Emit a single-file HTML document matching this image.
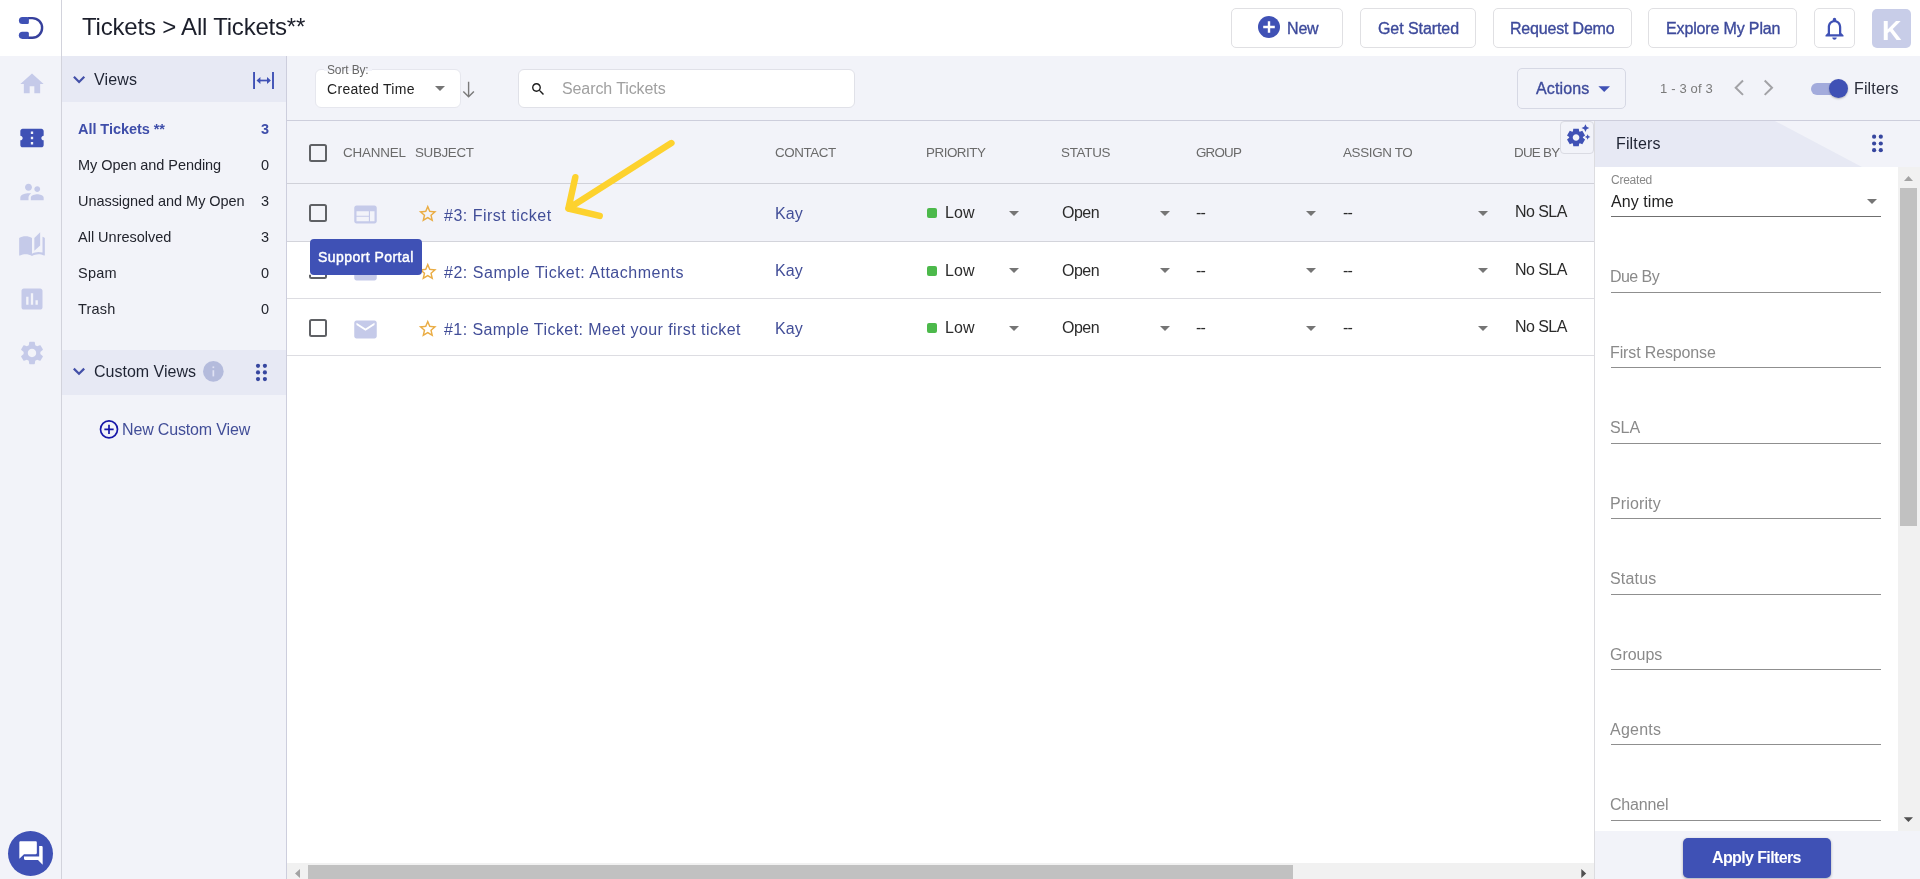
<!DOCTYPE html>
<html lang="en"><head><meta charset="utf-8"><title>Tickets - All Tickets</title>
<style>
html,body{margin:0;padding:0}
body{width:1920px;height:879px;overflow:hidden;position:relative;background:#f2f3f9;font-family:"Liberation Sans",sans-serif;-webkit-font-smoothing:antialiased}
.t{position:absolute;line-height:1;white-space:nowrap;z-index:2;will-change:transform}
.z3{z-index:3}
.z5{z-index:6}
.a{position:absolute;box-sizing:border-box}
svg{position:absolute;overflow:visible}
.btn{position:absolute;box-sizing:border-box;border:1px solid #e0e0e3;border-radius:5px;background:#fff}
.cb{position:absolute;box-sizing:border-box;width:18px;height:18px;border:2px solid #5f6165;border-radius:2.5px}
.ln{position:absolute;height:1px;background:#d4d6e4}
.ul{position:absolute;left:1611px;width:270px;height:1px;background:#8f8f8f}
.tri{position:absolute;width:0;height:0;border-left:5px solid transparent;border-right:5px solid transparent;border-top:5.2px solid #757575}
.gsq{position:absolute;width:10px;height:10px;border-radius:2px;background:#4cb94b}

</style></head>
<body>
<!-- top header -->
<div class="a" id="hdr" style="left:0;top:0;width:1920px;height:56px;background:#fff"></div>
<div class="a" style="left:61px;top:0;width:1px;height:879px;background:#d2d3dc"></div>
<!-- logo -->
<svg style="left:0;top:0" width="62" height="56" viewBox="0 0 62 56">
  <path d="M28 18.1H32.3A9.8 9.8 0 0 1 32.3 37.7H28" fill="none" stroke="#36409c" stroke-width="2.4"/>
  <path d="M22.4 16.9H27.4Q28.9 16.9 28.9 18.4V22.4Q28.9 23.9 27.4 23.9H22.4A3.5 3.5 0 0 1 22.4 16.9Z" fill="#3f51b5"/>
  <path d="M22.4 31.8H27.4Q28.9 31.8 28.9 33.3V37.4Q28.9 38.9 27.4 38.9H22.4A3.55 3.55 0 0 1 22.4 31.8Z" fill="#3f51b5"/>
</svg>
<!-- nav rail icons (28px material) -->
<svg style="left:17.7px;top:69.8px" width="28" height="28" viewBox="0 0 24 24"><path fill="#c5cae9" d="M10 20v-6h4v6h5v-8h3L12 3 2 12h3v8z"/></svg>
<svg style="left:17.7px;top:123.6px" width="28" height="28" viewBox="0 0 24 24"><path fill="#3f51b5" d="M22 10V6c0-1.11-.9-2-2-2H4c-1.1 0-1.990.890-1.990 2v4c1.100 0 1.990.900 1.990 2s-.890 2-2 2v4c0 1.100.900 2 2 2h16c1.100 0 2-.900 2-2v-4c-1.100 0-2-.900-2-2s.900-2 2-2zm-9 7.500h-2v-2h2v2zm0-4.500h-2v-2h2v2zm0-4.500h-2v-2h2v2z"/></svg>
<svg style="left:17.7px;top:177.5px" width="28" height="28" viewBox="0 0 24 24"><path fill="#c5cae9" d="M16.500 12c1.380 0 2.490-1.120 2.490-2.500S17.880 7 16.500 7C15.120 7 14 8.120 14 9.500s1.120 2.500 2.500 2.500zM9 11c1.660 0 2.990-1.340 2.990-3S10.660 5 9 5C7.340 5 6 6.340 6 8s1.340 3 3 3zm7.500 3c-1.830 0-5.500.920-5.500 2.750V19h11v-2.250c0-1.830-3.670-2.750-5.500-2.750zM9 13c-2.330 0-7 1.170-7 3.500V19h7v-2.250c0-.850.330-2.340 2.370-3.470C10.500 13.100 9.660 13 9 13z"/></svg>
<svg style="left:17.7px;top:231.4px" width="28" height="28" viewBox="0 0 24 24"><path fill="#c5cae9" d="M19 1l-5 5v11l5-4.500V1zM1 6v14.650c0 .250.250.500.500.500.100 0 .150-.050.250-.050C3.100 20.450 5.050 20 6.500 20c1.950 0 4.050.400 5.500 1.500V6c-1.450-1.100-3.550-1.500-5.500-1.500S2.450 4.900 1 6zm22 13.500V6c-.600-.450-1.250-.750-2-1v13.500c-1.100-.350-2.300-.500-3.500-.500-1.700 0-4.150.650-5.500 1.500v2c1.350-.850 3.800-1.500 5.500-1.500 1.650 0 3.350.300 4.750 1.050.100.050.150.050.250.050.250 0 .500-.250.500-.500v-1z"/></svg>
<svg style="left:17.7px;top:285.3px" width="28" height="28" viewBox="0 0 24 24"><path fill="#c5cae9" d="M19 3H5c-1.100 0-2 .900-2 2v14c0 1.100.900 2 2 2h14c1.100 0 2-.900 2-2V5c0-1.100-.900-2-2-2zM9 17H7v-7h2v7zm4 0h-2V7h2v10zm4 0h-2v-4h2v4z"/></svg>
<svg style="left:17.7px;top:339.2px" width="28" height="28" viewBox="0 0 24 24"><path fill="#c5cae9" d="M19.140 12.940c.040-.300.060-.610.060-.940 0-.320-.020-.640-.070-.940l2.030-1.580c.180-.140.230-.410.120-.610l-1.920-3.320c-.120-.220-.370-.290-.590-.220l-2.390.960c-.500-.380-1.030-.700-1.620-.940l-.360-2.540c-.040-.240-.240-.410-.480-.410h-3.840c-.240 0-.430.170-.470.410l-.360 2.540c-.590.240-1.130.570-1.620.940l-2.390-.960c-.220-.080-.470 0-.590.220L2.740 8.870c-.120.210-.080.470.120.610l2.030 1.580c-.050.300-.090.630-.090.940s.020.640.070.940l-2.030 1.580c-.180.140-.230.410-.120.610l1.920 3.320c.120.220.370.290.590.220l2.390-.960c.500.380 1.030.700 1.620.940l.360 2.540c.050.240.240.410.480.410h3.840c.240 0 .440-.170.470-.410l.360-2.540c.590-.240 1.130-.560 1.620-.940l2.390.960c.220.080.470 0 .590-.220l1.920-3.320c.120-.220.070-.470-.120-.610l-2.010-1.580zM12 15.600c-1.980 0-3.600-1.620-3.600-3.600s1.620-3.600 3.600-3.600 3.600 1.620 3.600 3.600-1.620 3.600-3.600 3.600z"/></svg>
<!-- chat fab -->
<div class="a" style="left:8px;top:831px;width:45px;height:45px;border-radius:50%;background:#3f51b5"></div>
<svg style="left:17px;top:838.5px" width="28" height="28" viewBox="0 0 24 24"><path fill="#fff" d="M21 6h-2v9H6v2c0 .55.45 1 1 1h11l4 4V7c0-.55-.45-1-1-1zm-4 6V3c0-.55-.45-1-1-1H3c-.55 0-1 .45-1 1v14l4-4h10c.55 0 1-.45 1-1z"/></svg>

<!-- header buttons -->
<div class="btn" style="left:1231px;top:8px;width:112px;height:40px"></div>
<div class="btn" style="left:1360px;top:8px;width:116px;height:40px"></div>
<div class="btn" style="left:1492.5px;top:8px;width:139px;height:40px"></div>
<div class="btn" style="left:1647.5px;top:8px;width:149px;height:40px"></div>
<div class="btn" style="left:1813.5px;top:8px;width:41px;height:40px"></div>
<svg style="left:1258.4px;top:16.4px" width="22" height="22" viewBox="0 0 22 22"><circle cx="11" cy="11" r="11" fill="#3f51b5"/><path d="M11 5.2V16.800M5.200 11H16.800" stroke="#fff" stroke-width="2.4" fill="none"/></svg>
<svg style="left:1820.9px;top:15px" width="27" height="27" viewBox="0 0 24 24"><path fill="#3f51b5" d="M12 22c1.100 0 2-.900 2-2h-4c0 1.100.900 2 2 2zm6-6v-5c0-3.070-1.630-5.640-4.500-6.320V4c0-.830-.670-1.500-1.500-1.500s-1.500.670-1.500 1.500v.680C7.640 5.360 6 7.920 6 11v5l-2 2v1h16v-1l-2-2zm-2 1H8v-6c0-2.480 1.510-4.500 4-4.500s4 2.020 4 4.500v6z"/></svg>
<div class="a" style="left:1872px;top:9px;width:39px;height:39px;border-radius:5px;background:#c8cde8"></div>

<!-- sidebar -->
<div class="a" style="left:62px;top:56px;width:224px;height:46px;background:#e7e9f4"></div>
<div class="a" style="left:62px;top:350px;width:224px;height:44.500px;background:#e7e9f4"></div>
<div class="a" style="left:286px;top:56px;width:1px;height:823px;background:#cdcedd"></div>
<svg style="left:62px;top:56px" width="224" height="400" viewBox="62 56 224 400">
  <path d="M73.900 76.800L79.100 82L84.300 76.800" fill="none" stroke="#4350a8" stroke-width="2.200"/>
  <path d="M73.800 368.600L79 373.800L84.200 368.600" fill="none" stroke="#4350a8" stroke-width="2.200"/>
  <path d="M254.050 72.100V88.900M273 72.100V88.900" stroke="#3f51b5" stroke-width="1.900" fill="none"/>
  <path d="M259.500 80.500H268" stroke="#3f51b5" stroke-width="1.700" fill="none"/>
  <path d="M256.500 80.500L260.400 76.900V84.100ZM270.900 80.500L267 76.900V84.100Z" fill="#3f51b5"/>
  <circle cx="213.350" cy="371.400" r="10.300" fill="#b4bbdc"/>
  <rect x="212.500" y="370.200" width="1.700" height="6.200" fill="#dfe2f3"/><rect x="212.500" y="366.400" width="1.700" height="1.700" fill="#dfe2f3"/>
  <g fill="#36469f"><circle cx="258.0" cy="365.8" r="2.100"/><circle cx="264.9" cy="365.8" r="2.100"/><circle cx="258.0" cy="372.4" r="2.100"/><circle cx="264.9" cy="372.4" r="2.100"/><circle cx="258.0" cy="379.1" r="2.100"/><circle cx="264.9" cy="379.1" r="2.100"/></g>
  <circle cx="109" cy="429.350" r="8.500" fill="none" stroke="#1717a8" stroke-width="1.700"/>
  <path d="M109 424.700V434M104.350 429.350H113.650" stroke="#1717a8" stroke-width="1.700" fill="none"/>
</svg>

<!-- toolbar -->
<div class="ln" style="left:287px;top:120px;width:1633px;background:#cdcedc"></div>
<div class="a" style="left:315px;top:69px;width:146px;height:39px;background:#fff;border:1px solid #e6e7ee;border-radius:6px"></div>
<div class="a" style="left:324px;top:67px;width:48px;height:4px;background:#f2f3f9"></div>
<div class="tri" style="left:435.200px;top:86.200px"></div>
<svg style="left:460px;top:78px" width="18" height="22" viewBox="460 78 18 22"><path d="M468.600 81.700V97M463.300 91.400L468.600 96.800L473.900 91.400" fill="none" stroke="#7a7a7a" stroke-width="1.400"/></svg>
<div class="a" style="left:518px;top:69px;width:337px;height:39px;background:#fff;border:1px solid #e0e1e8;border-radius:6px"></div>
<svg style="left:530.100px;top:80.800px" width="16.400" height="16.400" viewBox="0 0 24 24"><path fill="#1d1d1d" d="M15.500 14h-.790l-.280-.270C15.410 12.590 16 11.110 16 9.500 16 5.910 13.090 3 9.500 3S3 5.910 3 9.500 5.910 16 9.500 16c1.610 0 3.090-.590 4.230-1.570l.270.280v.790l5 4.990L20.490 19l-4.990-5zm-6 0C7.010 14 5 11.990 5 9.500S7.010 5 9.500 5 14 7.010 14 9.500 11.990 14 9.500 14z"/></svg>
<div class="a" style="left:1517px;top:68px;width:109px;height:41px;border:1px solid #d6d8e4;border-radius:5px"></div>
<svg style="left:1598px;top:86px" width="13" height="7" viewBox="1598 86 13 7"><path d="M1598.400 86.200H1610L1604.200 92.100Z" fill="#3f51b5"/></svg>
<svg style="left:1730px;top:76px" width="50" height="24" viewBox="1730 76 50 24"><path d="M1743 80.500L1735.700 87.700L1743 94.900M1764.700 80.500L1772 87.700L1764.700 94.900" fill="none" stroke="#a2a2a6" stroke-width="2"/></svg>
<div class="a" style="left:1811px;top:83px;width:34px;height:12px;border-radius:6px;background:#a3abdc"></div>
<div class="a" style="left:1828.500px;top:79.300px;width:19px;height:19px;border-radius:50%;background:#3f51b5;box-shadow:0 1px 2px rgba(0,0,0,.25)"></div>

<!-- table -->
<div class="a" style="left:287px;top:242px;width:1307px;height:621px;background:#fff"></div>
<div class="ln" style="left:287px;top:183px;width:1307px;background:#d0d1d9"></div>
<div class="ln" style="left:287px;top:241px;width:1307px;background:#d3d4db"></div>
<div class="ln" style="left:287px;top:298px;width:1307px;background:#dddde2"></div>
<div class="ln" style="left:287px;top:355px;width:1307px;background:#dddde2"></div>
<div class="cb" style="left:309px;top:144px"></div>
<div class="cb" style="left:309px;top:204px"></div>
<div class="cb" style="left:309px;top:261.400px;clip-path:inset(13.400px 0 0 0)"></div>
<div class="cb" style="left:309px;top:319px"></div>
<!-- channel icons -->
<svg style="left:352.400px;top:200.900px" width="27" height="27" viewBox="0 0 24 24"><path fill="#c5cae9" d="M20 4H4c-1.100 0-1.990.900-1.990 2L2 18c0 1.100.900 2 2 2h16c1.100 0 2-.900 2-2V6c0-1.100-.900-2-2-2zm-5 14H4v-4h11v4zm0-5H4V9h11v4zm5 5h-4V9h4v9z"/></svg>
<svg style="left:352.400px;top:258.300px" width="27" height="27" viewBox="0 0 24 24"><path fill="#c5cae9" d="M20 4H4c-1.100 0-1.990.900-1.990 2L2 18c0 1.100.900 2 2 2h16c1.100 0 2-.900 2-2V6c0-1.100-.900-2-2-2zm0 4l-8 5-8-5V6l8 5 8-5v2z"/></svg>
<svg style="left:352.400px;top:315.900px" width="27" height="27" viewBox="0 0 24 24"><path fill="#c5cae9" d="M20 4H4c-1.100 0-1.990.900-1.990 2L2 18c0 1.100.900 2 2 2h16c1.100 0 2-.900 2-2V6c0-1.100-.900-2-2-2zm0 4l-8 5-8-5V6l8 5 8-5v2z"/></svg>
<!-- stars -->
<svg style="left:416.650px;top:203.40px" width="21.500" height="21.500" viewBox="0 0 24 24"><path fill="#eaad45" d="M22 9.240l-7.190-.620L12 2 9.190 8.630 2 9.240l5.460 4.730L5.820 21 12 17.270 18.180 21l-1.630-7.030L22 9.240zM12 15.400l-3.760 2.270 1-4.280-3.320-2.880 4.380-.380L12 6.100l1.710 4.040 4.380.380-3.320 2.880 1 4.280L12 15.400z"/></svg>
<svg style="left:416.650px;top:260.80px" width="21.500" height="21.500" viewBox="0 0 24 24"><path fill="#eaad45" d="M22 9.240l-7.190-.620L12 2 9.190 8.630 2 9.240l5.460 4.730L5.820 21 12 17.270 18.180 21l-1.630-7.030L22 9.240zM12 15.400l-3.760 2.270 1-4.280-3.320-2.880 4.380-.380L12 6.100l1.710 4.040 4.380.380-3.320 2.880 1 4.280L12 15.400z"/></svg>
<svg style="left:416.650px;top:318.20px" width="21.500" height="21.500" viewBox="0 0 24 24"><path fill="#eaad45" d="M22 9.240l-7.190-.620L12 2 9.190 8.630 2 9.240l5.460 4.730L5.820 21 12 17.270 18.180 21l-1.630-7.030L22 9.240zM12 15.400l-3.760 2.270 1-4.280-3.320-2.880 4.380-.380L12 6.100l1.710 4.040 4.380.380-3.320 2.880 1 4.280L12 15.400z"/></svg>
<div class="gsq" style="left:927px;top:208.1px"></div>
<div class="tri" style="left:1009px;top:210.8px"></div>
<div class="tri" style="left:1160px;top:210.8px"></div>
<div class="tri" style="left:1305.7px;top:210.8px"></div>
<div class="tri" style="left:1477.7px;top:210.8px"></div>
<div class="gsq" style="left:927px;top:265.5px"></div>
<div class="tri" style="left:1009px;top:268.2px"></div>
<div class="tri" style="left:1160px;top:268.2px"></div>
<div class="tri" style="left:1305.7px;top:268.2px"></div>
<div class="tri" style="left:1477.7px;top:268.2px"></div>
<div class="gsq" style="left:927px;top:322.9px"></div>
<div class="tri" style="left:1009px;top:325.6px"></div>
<div class="tri" style="left:1160px;top:325.6px"></div>
<div class="tri" style="left:1305.7px;top:325.6px"></div>
<div class="tri" style="left:1477.7px;top:325.6px"></div>
<!-- settings gear button -->
<div class="a" style="left:1560px;top:121px;width:34px;height:32.500px;border:1px solid #dadbe3;border-radius:4px;background:#f2f3f9"></div>
<svg style="left:1564.960px;top:122.470px" width="26.500" height="26.500" viewBox="0 0 24 24"><path fill="#3f51b5" d="M17.410 6.590L15 5.500l2.410-1.090L18.500 2l1.090 2.410L22 5.500l-2.410 1.090L18.500 9l-1.090-2.410zm3.870 6.130L20.500 11l-.780 1.720-1.720.780 1.720.780.780 1.720.780-1.720L23 13.500l-1.720-.780zm-5.040 1.650l1.940 1.470-2.500 4.330-2.240-.940c-.200.130-.420.260-.640.370l-.300 2.400h-5l-.300-2.410c-.220-.110-.430-.230-.640-.370l-2.240.940-2.500-4.330 1.940-1.470c-.010-.110-.010-.240-.010-.360s0-.250.010-.370l-1.940-1.470 2.500-4.330 2.240.940c.200-.130.420-.260.640-.370L7.500 6h5l.300 2.410c.220.110.430.230.640.370l2.240-.940 2.500 4.330-1.940 1.470c.010.120.010.240.010.370s0 .240-.010.360zM13 14c0-1.660-1.340-3-3-3s-3 1.340-3 3 1.340 3 3 3 3-1.340 3-3z"/></svg>
<!-- horizontal scrollbar -->
<div class="a" style="left:287px;top:863px;width:1307px;height:16px;background:#f1f1f1"></div>
<div class="a" style="left:308px;top:865px;width:985px;height:14px;background:#c1c1c1"></div>
<svg style="left:287px;top:863px" width="1307" height="16" viewBox="287 863 1307 16"><path d="M295 873.500L300 869V878Z" fill="#a3a3a3"/><path d="M1586.200 873.500L1581.300 869V878Z" fill="#505050"/></svg>

<!-- filters panel -->
<div class="a" style="left:1594px;top:121px;width:1px;height:758px;background:#dcdce0"></div>
<svg style="left:1595px;top:121px" width="325" height="46" viewBox="0 0 325 46"><polygon points="0,0 180,0 267,46 0,46" fill="#e7e9f4"/></svg>
<div class="a" style="left:1595px;top:166.700px;width:303.200px;height:664.300px;background:#fff"></div>
<div class="a" style="left:1898.200px;top:166.700px;width:21.800px;height:664.300px;background:#f1f1f1"></div>
<div class="a" style="left:1900px;top:188px;width:17px;height:338.300px;background:#c1c1c1"></div>
<svg style="left:1898px;top:167px" width="22" height="663" viewBox="1898 167 22 663"><path d="M1904 181L1908.500 176L1913 181Z" fill="#a3a3a3"/><path d="M1903.800 817.300L1908.400 822L1913 817.300Z" fill="#505050"/></svg>
<svg style="left:1868px;top:130px" width="20" height="26" viewBox="1868 130 20 26"><g fill="#36469f"><circle cx="1874.1" cy="136.7" r="2.100"/><circle cx="1880.8" cy="136.7" r="2.100"/><circle cx="1874.1" cy="143.5" r="2.100"/><circle cx="1880.8" cy="143.5" r="2.100"/><circle cx="1874.1" cy="150.2" r="2.100"/><circle cx="1880.8" cy="150.2" r="2.100"/></g></svg>
<div class="tri" style="left:1867.200px;top:198.800px"></div>
<div class="ul" style="top:216px;background:#6f6f6f"></div>
<div class="ul" style="top:292px"></div>
<div class="ul" style="top:367px"></div>
<div class="ul" style="top:443px"></div>
<div class="ul" style="top:518px"></div>
<div class="ul" style="top:594px"></div>
<div class="ul" style="top:669px"></div>
<div class="ul" style="top:744px"></div>
<div class="ul" style="top:820px"></div>
<div class="a" style="left:1683px;top:838px;width:148px;height:40px;border-radius:5px;background:#3f51b5;box-shadow:0 1px 3px rgba(0,0,0,.3)"></div>

<!-- tooltip -->
<div class="a" style="left:310px;top:239px;width:112px;height:36px;border-radius:4px;background:#3f51b5;z-index:5"></div>
<!-- annotation arrow -->
<svg style="left:540px;top:130px;z-index:4" width="160" height="100" viewBox="540 130 160 100"><path d="M671.400 143.100L568.400 208.500M575.300 177.200L568.400 208.500L599.700 215.900" fill="none" stroke="#fdd22e" stroke-width="6.500" stroke-linecap="round" stroke-linejoin="round"/></svg>

<!-- text -->
<span class="t" style="left:82.07px;top:14.50px;font-size:24px;color:#1c1f2b;letter-spacing:-0.207px;">Tickets &gt; All Tickets**</span>
<span class="t" style="left:1286.50px;top:20.50px;font-size:16px;color:#3d4a9b;-webkit-text-stroke:0.35px #3d4a9b;letter-spacing:-0.175px;">New</span>
<span class="t" style="left:1377.55px;top:20.50px;font-size:16px;color:#3d4a9b;-webkit-text-stroke:0.35px #3d4a9b;letter-spacing:-0.078px;">Get Started</span>
<span class="t" style="left:1509.50px;top:20.50px;font-size:16px;color:#3d4a9b;-webkit-text-stroke:0.35px #3d4a9b;letter-spacing:-0.190px;">Request Demo</span>
<span class="t" style="left:1665.90px;top:20.50px;font-size:16px;color:#3d4a9b;-webkit-text-stroke:0.35px #3d4a9b;letter-spacing:-0.145px;">Explore My Plan</span>
<span class="t" style="left:1882.39px;top:17.50px;font-size:27px;color:#ffffff;font-weight:700;">K</span>
<span class="t" style="left:326.74px;top:64.00px;font-size:12px;color:#666;letter-spacing:-0.143px;">Sort By:</span>
<span class="t" style="left:326.81px;top:82.00px;font-size:14px;color:#222;letter-spacing:0.318px;">Created Time</span>
<span class="t" style="left:561.61px;top:80.50px;font-size:16px;color:#a0a0a0;letter-spacing:-0.098px;">Search Tickets</span>
<span class="t" style="left:1536.01px;top:80.50px;font-size:16px;color:#3d4a9b;-webkit-text-stroke:0.35px #3d4a9b;letter-spacing:0.146px;">Actions</span>
<span class="t" style="left:1660.20px;top:82.00px;font-size:13px;color:#7a7a7a;letter-spacing:0.159px;">1 - 3 of 3</span>
<span class="t" style="left:1853.68px;top:80.50px;font-size:16px;color:#2a2d3a;letter-spacing:0.145px;">Filters</span>
<span class="t" style="left:342.60px;top:145.80px;font-size:13.4px;color:#6a6a6a;letter-spacing:-0.159px;">CHANNEL</span>
<span class="t" style="left:415.23px;top:145.80px;font-size:13.4px;color:#6a6a6a;letter-spacing:-0.354px;">SUBJECT</span>
<span class="t" style="left:774.63px;top:145.80px;font-size:13.4px;color:#6a6a6a;letter-spacing:-0.439px;">CONTACT</span>
<span class="t" style="left:926.00px;top:145.80px;font-size:13.4px;color:#6a6a6a;letter-spacing:-0.475px;">PRIORITY</span>
<span class="t" style="left:1061.04px;top:145.80px;font-size:13.4px;color:#6a6a6a;letter-spacing:-0.256px;">STATUS</span>
<span class="t" style="left:1196.33px;top:145.80px;font-size:13.4px;color:#6a6a6a;letter-spacing:-0.823px;">GROUP</span>
<span class="t" style="left:1342.51px;top:145.80px;font-size:13.4px;color:#6a6a6a;letter-spacing:-0.346px;">ASSIGN TO</span>
<span class="t" style="left:1514.30px;top:145.80px;font-size:13.4px;color:#6a6a6a;letter-spacing:-0.742px;">DUE BY</span>
<span class="t" style="left:443.89px;top:207.50px;font-size:16px;color:#424e98;letter-spacing:0.501px;">#3: First ticket</span>
<span class="t" style="left:774.50px;top:205.50px;font-size:16px;color:#424e98;letter-spacing:0.057px;">Kay</span>
<span class="t" style="left:945.00px;top:204.50px;font-size:16px;color:#2b2b2b;letter-spacing:0.059px;">Low</span>
<span class="t" style="left:1061.56px;top:204.50px;font-size:16px;color:#2b2b2b;letter-spacing:-0.521px;">Open</span>
<span class="t" style="left:1196.46px;top:204.50px;font-size:16px;color:#2b2b2b;letter-spacing:-0.816px;">--</span>
<span class="t" style="left:1342.56px;top:204.50px;font-size:16px;color:#2b2b2b;letter-spacing:-0.816px;">--</span>
<span class="t" style="left:1514.90px;top:203.50px;font-size:16px;color:#2b2b2b;letter-spacing:-0.557px;">No SLA</span>
<span class="t" style="left:443.91px;top:264.50px;font-size:16px;color:#424e98;letter-spacing:0.528px;">#2: Sample Ticket: Attachments</span>
<span class="t" style="left:774.50px;top:262.50px;font-size:16px;color:#424e98;letter-spacing:0.057px;">Kay</span>
<span class="t" style="left:945.00px;top:262.50px;font-size:16px;color:#2b2b2b;letter-spacing:0.059px;">Low</span>
<span class="t" style="left:1061.56px;top:262.50px;font-size:16px;color:#2b2b2b;letter-spacing:-0.521px;">Open</span>
<span class="t" style="left:1196.46px;top:262.50px;font-size:16px;color:#2b2b2b;letter-spacing:-0.816px;">--</span>
<span class="t" style="left:1342.56px;top:262.50px;font-size:16px;color:#2b2b2b;letter-spacing:-0.816px;">--</span>
<span class="t" style="left:1514.90px;top:261.50px;font-size:16px;color:#2b2b2b;letter-spacing:-0.557px;">No SLA</span>
<span class="t" style="left:443.89px;top:321.50px;font-size:16px;color:#424e98;letter-spacing:0.433px;">#1: Sample Ticket: Meet your first ticket</span>
<span class="t" style="left:774.50px;top:320.50px;font-size:16px;color:#424e98;letter-spacing:0.057px;">Kay</span>
<span class="t" style="left:945.00px;top:319.50px;font-size:16px;color:#2b2b2b;letter-spacing:0.059px;">Low</span>
<span class="t" style="left:1061.56px;top:319.50px;font-size:16px;color:#2b2b2b;letter-spacing:-0.521px;">Open</span>
<span class="t" style="left:1196.46px;top:319.50px;font-size:16px;color:#2b2b2b;letter-spacing:-0.816px;">--</span>
<span class="t" style="left:1342.56px;top:319.50px;font-size:16px;color:#2b2b2b;letter-spacing:-0.816px;">--</span>
<span class="t" style="left:1514.90px;top:318.50px;font-size:16px;color:#2b2b2b;letter-spacing:-0.557px;">No SLA</span>
<span class="t" style="left:94.22px;top:71.50px;font-size:16px;color:#1f2433;letter-spacing:0.153px;">Views</span>
<span class="t" style="left:78.26px;top:121.75px;font-size:14.5px;color:#3f4eaa;font-weight:700;letter-spacing:-0.048px;">All Tickets **</span>
<span class="t" style="left:260.74px;top:121.75px;font-size:14.5px;color:#3f4eaa;font-weight:700;">3</span>
<span class="t" style="left:78.30px;top:157.75px;font-size:14.5px;color:#23252e;letter-spacing:-0.063px;">My Open and Pending</span>
<span class="t" style="left:261.12px;top:157.75px;font-size:14.5px;color:#23252e;">0</span>
<span class="t" style="left:78.30px;top:193.75px;font-size:14.5px;color:#23252e;letter-spacing:-0.048px;">Unassigned and My Open</span>
<span class="t" style="left:260.99px;top:193.75px;font-size:14.5px;color:#23252e;">3</span>
<span class="t" style="left:78.48px;top:229.75px;font-size:14.5px;color:#23252e;letter-spacing:-0.007px;">All Unresolved</span>
<span class="t" style="left:260.99px;top:229.75px;font-size:14.5px;color:#23252e;">3</span>
<span class="t" style="left:78.32px;top:265.75px;font-size:14.5px;color:#23252e;letter-spacing:0.234px;">Spam</span>
<span class="t" style="left:261.12px;top:265.75px;font-size:14.5px;color:#23252e;">0</span>
<span class="t" style="left:78.43px;top:301.75px;font-size:14.5px;color:#23252e;letter-spacing:0.169px;">Trash</span>
<span class="t" style="left:261.12px;top:301.75px;font-size:14.5px;color:#23252e;">0</span>
<span class="t" style="left:94.25px;top:363.50px;font-size:16px;color:#1f2433;letter-spacing:0.005px;">Custom Views</span>
<span class="t" style="left:122.10px;top:421.50px;font-size:16px;color:#424e98;letter-spacing:-0.155px;">New Custom View</span>
<span class="t" style="left:1615.88px;top:135.50px;font-size:16px;color:#1f2433;letter-spacing:0.145px;">Filters</span>
<span class="t" style="left:1610.72px;top:174.00px;font-size:12px;color:#888;letter-spacing:-0.243px;">Created</span>
<span class="t" style="left:1610.66px;top:193.50px;font-size:16px;color:#222;letter-spacing:0.075px;">Any time</span>
<span class="t" style="left:1610.30px;top:268.50px;font-size:16px;color:#8a8a8a;letter-spacing:-0.565px;">Due By</span>
<span class="t" style="left:1610.30px;top:344.50px;font-size:16px;color:#8a8a8a;letter-spacing:-0.131px;">First Response</span>
<span class="t" style="left:1610.32px;top:419.50px;font-size:16px;color:#8a8a8a;letter-spacing:-0.064px;">SLA</span>
<span class="t" style="left:1610.25px;top:495.50px;font-size:16px;color:#8a8a8a;letter-spacing:0.122px;">Priority</span>
<span class="t" style="left:1610.31px;top:570.50px;font-size:16px;color:#8a8a8a;letter-spacing:0.202px;">Status</span>
<span class="t" style="left:1610.35px;top:646.50px;font-size:16px;color:#8a8a8a;letter-spacing:-0.037px;">Groups</span>
<span class="t" style="left:1610.47px;top:721.50px;font-size:16px;color:#8a8a8a;letter-spacing:0.227px;">Agents</span>
<span class="t" style="left:1610.34px;top:796.50px;font-size:16px;color:#8a8a8a;letter-spacing:-0.193px;">Channel</span>
<span class="t z3" style="left:1712.25px;top:849.50px;font-size:16px;color:#ffffff;font-weight:700;letter-spacing:-0.623px;">Apply Filters</span>
<span class="t z5" style="left:317.60px;top:250.00px;font-size:14px;color:#ffffff;-webkit-text-stroke:0.45px #ffffff;letter-spacing:0.443px;">Support Portal</span>
</body></html>
